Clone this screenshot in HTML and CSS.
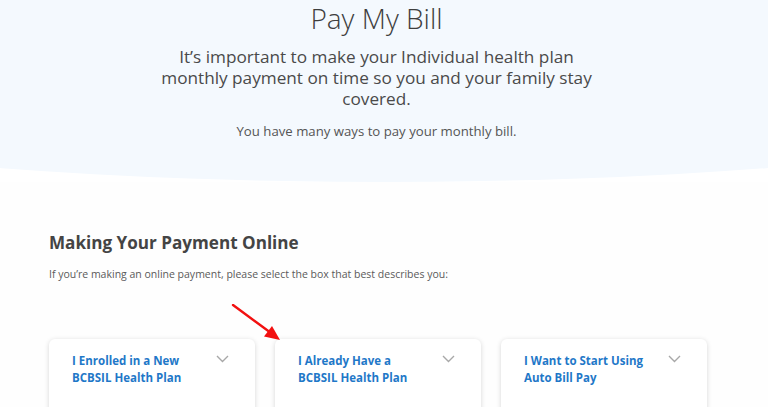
FILE: index.html
```html
<!DOCTYPE html>
<html lang="en">
<head>
<meta charset="utf-8">
<title>Pay My Bill</title>
<link rel="stylesheet" href="styles.css">
</head>
<body>
<div class="page">
  <header class="hero">
    <h1 class="hero-title">Pay My Bill</h1>
    <p class="hero-lead">It’s important to make your Individual health plan monthly payment on time so you and your family stay covered.</p>
    <p class="hero-note">You have many ways to pay your monthly bill.</p>
  </header>

  <section class="online">
    <h2 class="online-title">Making Your Payment Online</h2>
    <p class="online-intro">If you’re making an online payment, please select the box that best describes you:</p>

    <div class="cards">
      <svg class="arrow" width="60" height="45" viewBox="0 0 60 45" aria-hidden="true">
        <line x1="2" y1="1" x2="40" y2="29" stroke="#f21010" stroke-width="2.4" stroke-linecap="round"/>
        <polygon points="49,36 33,32.5 41,22" fill="#f21010"/>
      </svg>
      <div class="card">
        <div class="card-title">I Enrolled in a New BCBSIL Health Plan</div>
        <svg class="chev" width="13" height="8" viewBox="0 0 13 8"><polyline points="1,1 6.5,6.5 12,1" fill="none" stroke="#a8a8a8" stroke-width="1.4"/></svg>
      </div>
      <div class="card">
        <div class="card-title">I Already Have a BCBSIL Health Plan</div>
        <svg class="chev" width="13" height="8" viewBox="0 0 13 8"><polyline points="1,1 6.5,6.5 12,1" fill="none" stroke="#a8a8a8" stroke-width="1.4"/></svg>
      </div>
      <div class="card">
        <div class="card-title">I Want to Start Using Auto Bill Pay</div>
        <svg class="chev" width="13" height="8" viewBox="0 0 13 8"><polyline points="1,1 6.5,6.5 12,1" fill="none" stroke="#a8a8a8" stroke-width="1.4"/></svg>
      </div>
    </div>
  </section>
  <div class="cutoff"></div>
</div>
</body>
</html>
```

FILE: styles.css
```css
html, body {
  margin: 0;
  padding: 0;
  background: #ffffff;
}

body {
  font-family: "Open Sans", "Liberation Sans", sans-serif;
  color: #444;
  width: 768px;
  height: 415px;
  overflow: hidden;
}

.page {
  display: flex;
  flex-direction: column;
  height: 415px;
}

.hero {
  height: 182px;
  flex: none;
  background: #f4f9fe;
  clip-path: ellipse(130% 100% at 50% 0%);
  text-align: center;
  box-sizing: border-box;
  padding: 1px 15px 0 0;
}

.hero-title {
  margin: 0;
  font-size: 28px;
  line-height: 34px;
  font-weight: 300;
  color: #3e3e3e;
}

.hero-lead {
  margin: 11px auto 0;
  width: 450px;
  font-size: 17.2px;
  line-height: 21px;
  font-weight: 400;
  color: #4a4a4a;
}

.hero-note {
  margin: 12px 0 0;
  font-size: 13.2px;
  line-height: 20px;
  color: #555;
}

.online {
  flex: 1;
  padding: 49px 0 0 49px;
  overflow: hidden;
  background: #fefefe;
}

.online-title {
  margin: 0;
  font-size: 17.1px;
  line-height: 24px;
  font-weight: 700;
  color: #444;
}

.online-intro {
  margin: 11px 0 0;
  font-size: 10.5px;
  line-height: 16px;
  color: #5a5a5a;
}

.cards {
  position: relative;
  display: flex;
  gap: 20px;
  margin-top: 57px;
}

.arrow {
  position: absolute;
  left: 182px;
  top: -35px;
}

.card {
  width: 206px;
  height: 120px;
  box-sizing: border-box;
  background: #fff;
  border-radius: 6px;
  box-shadow: 0 1px 5px rgba(0, 0, 0, 0.16);
  padding: 14px 30px 0 23px;
  display: flex;
  justify-content: space-between;
  align-items: flex-start;
}

.card-title {
  width: 130px;
  font-size: 11.5px;
  line-height: 16.5px;
  font-weight: 700;
  color: #1f78c8;
}

.chev {
  margin-top: 2px;
  margin-right: -4px;
  flex: none;
}

.cutoff {
  height: 8px;
  flex: none;
  background: #ffffff;
}
```
